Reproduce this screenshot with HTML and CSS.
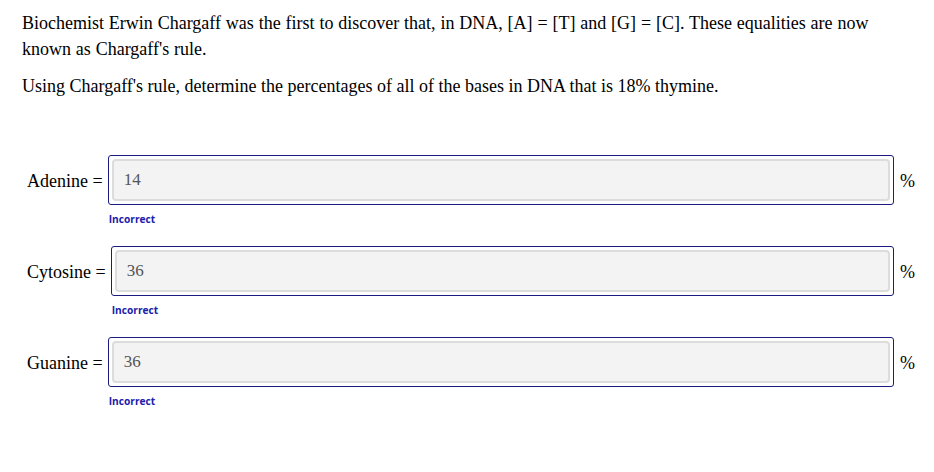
FILE: index.html
```html
<!DOCTYPE html>
<html>
<head>
<meta charset="utf-8">
<link rel="stylesheet" href="styles.css">
</head>
<body>
<div class="page">
  <p class="text intro">Biochemist Erwin Chargaff was the first to discover that, in DNA, [A] = [T] and [G] = [C]. These equalities are now known as Chargaff's rule.</p>
  <p class="text">Using Chargaff's rule, determine the percentages of all of the bases in DNA that is 18% thymine.</p>
  <div class="rows">
    <div class="row">
      <span class="label">Adenine =</span>
      <div class="field">
        <div class="box"><div class="input">14</div></div>
        <div class="feedback">Incorrect</div>
      </div>
      <span class="unit">%</span>
    </div>
    <div class="row">
      <span class="label">Cytosine =</span>
      <div class="field">
        <div class="box"><div class="input">36</div></div>
        <div class="feedback">Incorrect</div>
      </div>
      <span class="unit">%</span>
    </div>
    <div class="row">
      <span class="label">Guanine =</span>
      <div class="field">
        <div class="box"><div class="input">36</div></div>
        <div class="feedback">Incorrect</div>
      </div>
      <span class="unit">%</span>
    </div>
  </div>
</div>
</body>
</html>
```
FILE: styles.css
```css
html, body {
  margin: 0;
  padding: 0;
  background: #ffffff;
}
.page {
  padding: 10px 22px 0 22px;
  font-family: "Liberation Serif", "Times New Roman", serif;
  font-size: 18px;
  color: #000;
}
.text {
  margin: 0 0 11px 0;
  line-height: 26px;
}
.intro {
  word-spacing: 0.35px;
}
.rows {
  margin-top: 56px;
  padding-left: 5px;
}
.row {
  display: flex;
  align-items: flex-start;
  margin-bottom: 20px;
}
.label {
  line-height: 53px;
  white-space: nowrap;
  margin-right: 5px;
}
.field {
  flex: 1;
  display: flex;
  flex-direction: column;
}
.box {
  border: 1px solid #1b1b82;
  border-radius: 3px;
  padding: 3px;
  height: 42px;
}
.input {
  box-sizing: border-box;
  height: 42px;
  background: #f3f3f3;
  border: 2px solid #dcdcdc;
  border-radius: 4px;
  padding: 0 10px;
  line-height: 38px;
  color: #555;
  font-size: 17px;
}
.feedback {
  margin-top: 7px;
  margin-left: 1px;
  font-family: "Open Sans", "Liberation Sans", sans-serif;
  font-weight: 700;
  font-size: 10.2px;
  line-height: 14px;
  color: #2020aa;
}
.unit {
  width: 12px;
  line-height: 53px;
  margin-left: 6px;
  white-space: nowrap;
}
```
